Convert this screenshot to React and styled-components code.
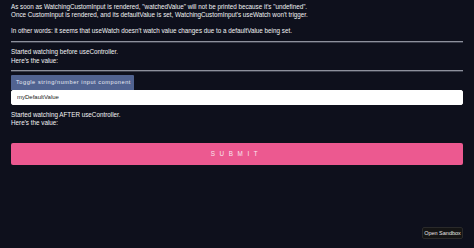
import React from "react";
import styled, { createGlobalStyle } from "styled-components";

const GlobalStyle = createGlobalStyle`
  html, body {
    margin: 0;
    padding: 0;
    background: #0e101c;
  }
  body {
    font-family: "Liberation Sans", Arial, sans-serif;
    color: #ffffff;
  }
`;

const Page = styled.div`
  min-height: 248px;
  box-sizing: border-box;
  padding: 3px 11px 0;
`;

const Text = styled.p`
  margin: ${(p) => p.$mt || 0}px 0 0;
  font-size: 6.3px;
  line-height: 8.4px;
  color: #f2f3f5;
`;

const Rule = styled.hr`
  margin: ${(p) => p.$mt || 0}px 0 0;
  border: none;
  border-top: 1px solid #8d909c;
  border-bottom: 1px solid #3a3d4a;
  height: 0;
`;

const ToggleButton = styled.button`
  display: block;
  margin-top: 3px;
  width: 123px;
  height: 15px;
  padding: 0 5px;
  border: none;
  border-radius: 1px 1px 0 0;
  background: #516391;
  color: #e9ecf4;
  font-family: "Liberation Sans", Arial, sans-serif;
  font-size: 5.6px;
  letter-spacing: 0.55px;
  white-space: nowrap;
  text-align: left;
`;

const Input = styled.input`
  display: block;
  box-sizing: border-box;
  width: 100%;
  height: 15px;
  margin: 0;
  padding: 0 5px;
  border: 1px solid #ffffff;
  border-radius: 2px;
  background: #ffffff;
  color: #222;
  font-family: "Liberation Sans", Arial, sans-serif;
  font-size: 6px;
  outline: none;
`;

const SubmitButton = styled.button`
  display: block;
  width: 100%;
  height: 22px;
  margin-top: 15px;
  border: none;
  border-radius: 2px;
  background: #ec5990;
  color: #f8e6ee;
  font-family: "Liberation Sans", Arial, sans-serif;
  font-size: 6.3px;
  letter-spacing: 4.6px;
  text-transform: uppercase;
  padding-left: 5px;
`;

const SandboxLink = styled.a`
  position: fixed;
  right: 11px;
  bottom: 9px;
  box-sizing: border-box;
  width: 41px;
  height: 12px;
  line-height: 10px;
  text-align: center;
  background: #141414;
  border: 1px solid #2a2a2a;
  border-radius: 2px;
  color: #e6e6e6;
  font-family: "Liberation Sans", Arial, sans-serif;
  font-size: 5.5px;
  text-decoration: none;
`;

export default function App() {
  return (
    <>
      <GlobalStyle />
      <Page>
        <Text>
          As soon as WatchingCustomInput is rendered, "watchedValue" will not be
          printed because it's "undefined".
          <br />
          Once CustomInput is rendered, and its defaultValue is set,
          WatchingCustomInput's useWatch won't trigger.
        </Text>
        <Text $mt={7.5}>
          In other words: it seems that useWatch doesn't watch value changes
          due to a defaultValue being set.
        </Text>
        <Rule $mt={5.5} />
        <Text $mt={5}>
          Started watching before useController.
          <br />
          Here's the value:
        </Text>
        <Rule $mt={4.5} />
        <ToggleButton type="button">Toggle string/number input component</ToggleButton>
        <Input defaultValue="myDefaultValue" />
        <Text $mt={6.5}>
          Started watching AFTER useController.
          <br />
          Here's the value:
        </Text>
        <SubmitButton type="submit">Submit</SubmitButton>
      </Page>
      <SandboxLink href="#">Open Sandbox</SandboxLink>
    </>
  );
}
